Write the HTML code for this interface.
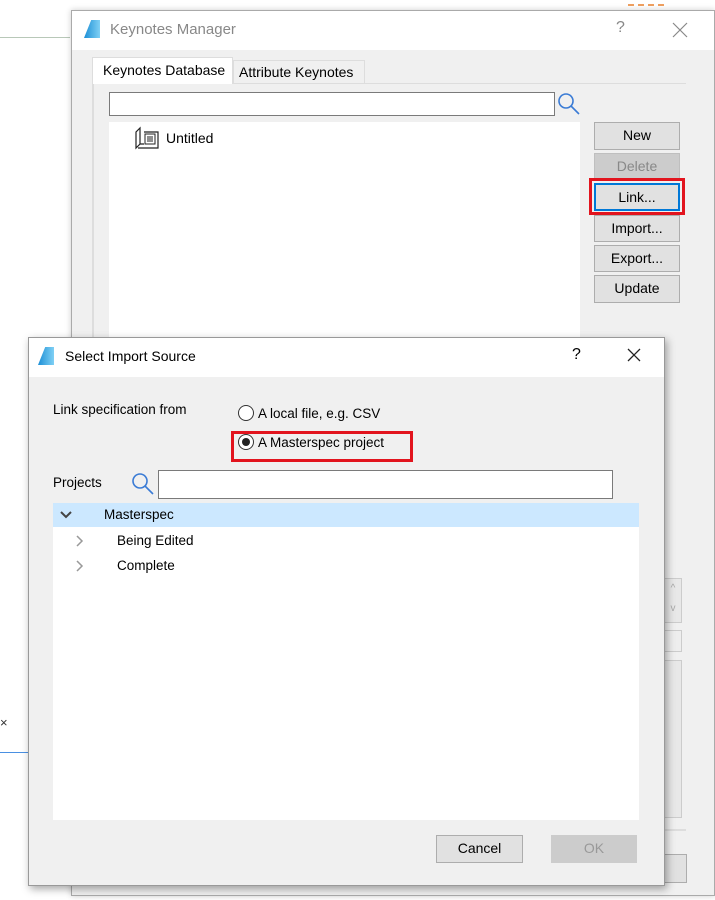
<!DOCTYPE html>
<html><head><style>
body{margin:0;width:715px;height:900px;background:#fff;position:relative;overflow:hidden;font-family:"Liberation Sans",sans-serif;font-size:14px;color:#000}
.a{position:absolute}
.btn{position:absolute;background:#e1e1e1;border:1px solid #adadad;box-sizing:border-box;text-align:center;font-size:14px;line-height:25px}
.logo{position:absolute;width:16px;height:18px;background:linear-gradient(90deg,#1d8fd6,#7fd0f5);clip-path:polygon(0 100%,45% 0,100% 0,100% 100%)}
</style></head><body>
<div class="a" style="left:0;top:37px;width:70px;height:1px;background:#b8c8b8"></div>
<div class="a" style="left:0;top:715px;font-size:13px;color:#333">×</div>
<div class="a" style="left:0;top:752px;width:28px;height:1px;background:#4a90e2"></div>
<div class="a" style="left:628px;top:0;width:36px;height:6px;border-bottom:2px dashed #f0a060;box-sizing:border-box"></div>

<!-- back window -->
<div class="a" style="left:71px;top:10px;width:644px;height:886px;background:#f0f0f0;border:1px solid #aaa;box-sizing:border-box;box-shadow:0 0 6px rgba(0,0,0,.2)"></div>
<div class="a" style="left:72px;top:11px;width:642px;height:39px;background:#fff"></div>
<div class="logo" style="left:84px;top:20px"></div>
<div class="a" style="left:110px;top:21px;font-size:15px;color:#888">Keynotes Manager</div>
<div class="a" style="left:616px;top:19px;font-size:16px;color:#888">?</div>
<svg class="a" style="left:672px;top:22px" width="16" height="16"><path d="M1 1L15 15M15 1L1 15" stroke="#888" stroke-width="1.2"/></svg>
<div class="a" style="left:92px;top:83px;width:594px;height:1px;background:#ddd"></div>
<div class="a" style="left:92px;top:57px;width:141px;height:27px;background:#fff;border:1px solid #ddd;border-bottom:none;box-sizing:border-box"></div>
<div class="a" style="left:103px;top:62px">Keynotes Database</div>
<div class="a" style="left:233px;top:60px;width:132px;height:23px;background:#f0f0f0;border:1px solid #ddd;border-bottom:none;box-sizing:border-box"></div>
<div class="a" style="left:239px;top:64px">Attribute Keynotes</div>
<div class="a" style="left:92px;top:84px;width:2px;height:800px;background:#ddd"></div>
<div class="a" style="left:109px;top:92px;width:446px;height:24px;background:#fff;border:1px solid #7a7a7a;box-sizing:border-box"></div>
<svg class="a" style="left:556px;top:92px" width="26" height="24"><circle cx="10" cy="9" r="7" fill="none" stroke="#3a7bd5" stroke-width="1.6"/><line x1="15" y1="14" x2="23" y2="22" stroke="#3a7bd5" stroke-width="1.6"/></svg>
<div class="a" style="left:109px;top:122px;width:471px;height:220px;background:#fff"></div>
<svg class="a" style="left:134px;top:126px" width="26" height="24"><path d="M2 22V6L6 2V18Z M6 18H10M4 22H24V6H10" fill="none" stroke="#222" stroke-width="1.2"/><rect x="11" y="8" width="10" height="10" fill="none" stroke="#222"/><path d="M13 11h6M13 13h6M13 15h6" stroke="#222"/></svg>
<div class="a" style="left:166px;top:130px">Untitled</div>
<div class="btn" style="left:594px;top:122px;width:86px;height:28px">New</div>
<div class="btn" style="left:594px;top:153px;width:86px;height:27px;background:#ccc;color:#888;border-color:#bfbfbf">Delete</div>
<div class="a" style="left:589px;top:178px;width:96px;height:37px;border:3px solid #e2141e;box-sizing:border-box"></div>
<div class="btn" style="left:594px;top:183px;width:86px;height:28px;border:2px solid #0078d7;line-height:24px">Link...</div>
<div class="btn" style="left:594px;top:215px;width:86px;height:27px">Import...</div>
<div class="btn" style="left:594px;top:245px;width:86px;height:27px">Export...</div>
<div class="btn" style="left:594px;top:275px;width:86px;height:28px">Update</div>
<div class="a" style="left:664px;top:578px;width:18px;height:45px;border:1px solid #ccc;background:#e8e8e8;box-sizing:border-box;color:#aaa;font-size:10px;text-align:center;line-height:20px">^<br>v</div>
<div class="a" style="left:664px;top:630px;width:18px;height:22px;border:1px solid #ccc;background:#eee;box-sizing:border-box"></div>
<div class="a" style="left:664px;top:660px;width:18px;height:158px;border:1px solid #ccc;background:#e8e8e8;box-sizing:border-box"></div>
<div class="a" style="left:664px;top:829px;width:22px;height:2px;background:#ddd"></div>
<div class="a" style="left:664px;top:854px;width:23px;height:29px;border:1px solid #adadad;background:#e1e1e1;box-sizing:border-box"></div>

<!-- front dialog -->
<div class="a" style="left:28px;top:337px;width:637px;height:549px;background:#f0f0f0;border:1px solid #999;box-sizing:border-box;box-shadow:2px 3px 8px rgba(0,0,0,.35)"></div>
<div class="a" style="left:29px;top:338px;width:635px;height:39px;background:#fff"></div>
<div class="logo" style="left:38px;top:347px"></div>
<div class="a" style="left:65px;top:348px">Select Import Source</div>
<div class="a" style="left:572px;top:346px;font-size:16px">?</div>
<svg class="a" style="left:627px;top:348px" width="14" height="14"><path d="M1 1L13 13M13 1L1 13" stroke="#222" stroke-width="1.3"/></svg>
<div class="a" style="left:53px;top:402px;font-size:13.5px">Link specification from</div>
<div class="a" style="left:238px;top:405px;width:16px;height:16px;border:1px solid #333;border-radius:50%;background:#fff;box-sizing:border-box"></div>
<div class="a" style="left:258px;top:406px;font-size:13.5px">A local file, e.g. CSV</div>
<div class="a" style="left:231px;top:431px;width:182px;height:31px;border:3px solid #e2141e;box-sizing:border-box"></div>
<div class="a" style="left:238px;top:434px;width:16px;height:16px;border:1px solid #333;border-radius:50%;background:#fff;box-sizing:border-box"></div>
<div class="a" style="left:242px;top:438px;width:8px;height:8px;border-radius:50%;background:#222"></div>
<div class="a" style="left:258px;top:435px;font-size:13.5px">A Masterspec project</div>
<div class="a" style="left:53px;top:475px;font-size:13.5px">Projects</div>
<svg class="a" style="left:130px;top:471px" width="26" height="26"><circle cx="10" cy="10" r="7" fill="none" stroke="#3a7bd5" stroke-width="1.6"/><line x1="15" y1="15" x2="23" y2="23" stroke="#3a7bd5" stroke-width="1.6"/></svg>
<div class="a" style="left:158px;top:470px;width:455px;height:29px;background:#fff;border:1px solid #7a7a7a;box-sizing:border-box"></div>
<div class="a" style="left:53px;top:503px;width:586px;height:317px;background:#fff"></div>
<div class="a" style="left:53px;top:503px;width:586px;height:24px;background:#cce8ff"></div>
<svg class="a" style="left:60px;top:510px" width="12" height="10"><path d="M1 2l5 5 5-5" fill="none" stroke="#444" stroke-width="2"/></svg>
<div class="a" style="left:104px;top:507px;font-size:13.5px">Masterspec</div>
<svg class="a" style="left:75px;top:535px" width="10" height="12"><path d="M2 1l5 5-5 5" fill="none" stroke="#999" stroke-width="1.5"/></svg>
<div class="a" style="left:117px;top:533px;font-size:13.5px">Being Edited</div>
<svg class="a" style="left:75px;top:560px" width="10" height="12"><path d="M2 1l5 5-5 5" fill="none" stroke="#999" stroke-width="1.5"/></svg>
<div class="a" style="left:117px;top:558px;font-size:13.5px">Complete</div>
<div class="btn" style="left:436px;top:835px;width:87px;height:28px">Cancel</div>
<div class="btn" style="left:551px;top:835px;width:86px;height:28px;background:#ccc;color:#999;border-color:#ccc">OK</div>
</body></html>
